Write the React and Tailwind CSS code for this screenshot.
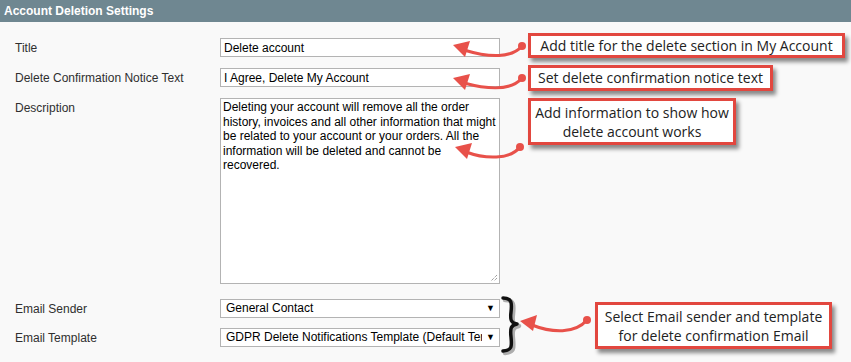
import React from 'react';

const Callout = ({ className, children }) => (
  <div
    className={`absolute border-[3px] border-[#e2473f] bg-white text-[14px] leading-[19px] text-[#222] text-center whitespace-nowrap shadow-[3px_4px_4px_rgba(0,0,0,0.45)] ${className}`}
    style={{ fontFamily: '"Open Sans", "Noto Sans", sans-serif' }}
  >
    {children}
  </div>
);

const Arrows = () => (
  <svg className="absolute left-0 top-0 pointer-events-none" width="851" height="362" viewBox="0 0 851 362">
    <g fill="none" stroke="#e8514a" strokeWidth="3" strokeLinecap="round">
      <path d="M522 46 C 512 58, 490 58, 464 50" />
      <path d="M522 78 C 512 90, 490 90, 464 83" />
      <path d="M520 147 C 510 160, 485 159, 466 152" />
      <path d="M587 320 C 575 334, 552 333, 532 325" />
    </g>
    <g fill="#e8514a">
      <circle cx="522" cy="46" r="4" />
      <circle cx="522" cy="78" r="4" />
      <circle cx="520" cy="147" r="4" />
      <circle cx="587" cy="320" r="4" />
      <polygon points="453,45 470,41 465,57" />
      <polygon points="453,78 470,74 465,90" />
      <polygon points="455,147 472,143 467,159" />
      <polygon points="520,321 537,315 533,331" />
    </g>
    <g fill="none" strokeLinecap="round" strokeLinejoin="round">
      <path
        d="M503 298 C 512 298, 512 303, 511 312 C 510 320, 511 323, 517 324 C 511 325, 510 328, 511 337 C 512 347, 512 350, 503 351"
        stroke="rgba(0,0,0,0.3)"
        strokeWidth="4.5"
        transform="translate(2,2)"
      />
      <path
        d="M503 298 C 512 298, 512 303, 511 312 C 510 320, 511 323, 517 324 C 511 325, 510 328, 511 337 C 512 347, 512 350, 503 351"
        stroke="#111"
        strokeWidth="3.5"
      />
    </g>
  </svg>
);

const Field = ({ children }) => (
  <div className="h-[19px] w-[280px] border border-[#b3b3b3] bg-white px-[3px] text-[12px] leading-[18px] text-black overflow-hidden whitespace-nowrap">
    {children}
  </div>
);

const Select = ({ children }) => (
  <div className="h-[19px] w-[280px] border border-[#b3b3b3] bg-white pl-[5px] pr-[4px] text-[12px] leading-[17px] text-black flex items-center">
    <span className="flex-1 overflow-hidden whitespace-nowrap">{children}</span>
    <span className="text-[9px] pl-[4px]">▼</span>
  </div>
);

const Row = ({ label, children, className = '' }) => (
  <div className={`flex ${className}`}>
    <div className="w-[205px] text-[12px] leading-[19px] pt-[1px] text-[#2f2f2f]">{label}</div>
    {children}
  </div>
);

export default function App() {
  return (
    <div
      className="relative w-[851px] h-[362px] bg-[#f9f9f9] overflow-hidden"
      style={{ fontFamily: '"Liberation Sans", Arial, sans-serif' }}
    >
      <div className="h-[22px] bg-[#6f8791] px-[4px] text-[12px] font-bold leading-[22px] text-white">
        Account Deletion Settings
      </div>

      <div className="pl-[15px] pt-[16px] flex flex-col">
        <Row label="Title">
          <Field>Delete account</Field>
        </Row>
        <Row label="Delete Confirmation Notice Text" className="mt-[10px]">
          <Field>I Agree, Delete My Account</Field>
        </Row>
        <Row label="Description" className="mt-[10px]">
          <div className="relative h-[186px] w-[280px] border border-[#b3b3b3] bg-white pl-[2px] pr-0 pt-[1px] text-[12px] leading-[14.5px] text-black whitespace-nowrap">
            Deleting your account will remove all the order<br />
            history, invoices and all other information that might<br />
            be related to your account or your orders. All the<br />
            information will be deleted and cannot be<br />
            recovered.
            <svg className="absolute right-[1px] bottom-[1px]" width="9" height="9" viewBox="0 0 9 9">
              <path d="M8 2 L2 8 M8 5 L5 8" stroke="#777" strokeWidth="1" strokeDasharray="1 1" />
            </svg>
          </div>
        </Row>
        <Row label="Email Sender" className="mt-[15px]">
          <Select>General Contact</Select>
        </Row>
        <Row label="Email Template" className="mt-[9px]">
          <Select>GDPR Delete Notifications Template (Default Template)</Select>
        </Row>
      </div>

      <Arrows />

      <Callout className="left-[528px] top-[33px] w-[317px] h-[25px] leading-[19px]">
        Add title for the delete section in My Account
      </Callout>
      <Callout className="left-[528px] top-[65px] w-[245px] h-[26px] leading-[20px]">
        Set delete confirmation notice text
      </Callout>
      <Callout className="left-[528px] top-[98px] w-[208px] h-[47px] pt-[2px]">
        Add information to show how<br />delete account works
      </Callout>
      <Callout className="left-[595px] top-[302px] w-[237px] h-[47px] pt-[2px]">
        Select Email sender and template<br />for delete confirmation Email
      </Callout>
    </div>
  );
}
